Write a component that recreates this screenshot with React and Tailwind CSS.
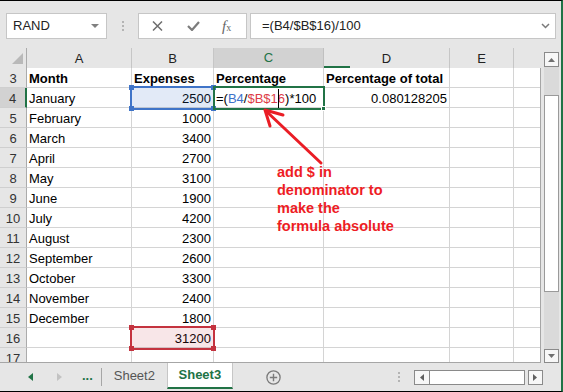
import React from "react";

const months = [
  ["January", 2500],
  ["February", 1000],
  ["March", 3400],
  ["April", 2700],
  ["May", 3100],
  ["June", 1900],
  ["July", 4200],
  ["August", 2300],
  ["September", 2600],
  ["October", 3300],
  ["November", 2400],
  ["December", 1800],
];

function cellContent(r, c) {
  // c: 0=A,1=B,2=C,3=D,4=E,5=F
  if (r === 3) {
    const t = ["Month", "Expenses", "Percentage", "Percentage of total", "", ""][c];
    return { text: t, bold: true };
  }
  if (r >= 4 && r <= 15) {
    const m = months[r - 4];
    if (c === 0) return { text: m[0] };
    if (c === 1) return { text: String(m[1]), right: true };
    if (r === 4 && c === 3) return { text: "0.080128205", right: true };
    if (r === 4 && c === 2) return { formula: true };
  }
  if (r === 16 && c === 1) return { text: "31200", right: true };
  return { text: "" };
}

function Formula() {
  return (
    <span>
      <span>=(</span>
      <span className="text-[#3d72c9]">B4</span>
      <span>/</span>
      <span className="text-[#dd3c48]">$B$1</span>
      <span className="relative text-[#dd3c48]">
        <span className="absolute left-0 top-[-2px] h-[19px] w-px bg-black"></span>6
      </span>
      <span>)*100</span>
    </span>
  );
}

function Tri({ dir, color, w = 5, h = 8 }) {
  const pts = {
    left: `${w},0 ${w},${h} 0,${h / 2}`,
    right: `0,0 0,${h} ${w},${h / 2}`,
    up: `0,${h} ${w},${h} ${w / 2},0`,
    down: `0,0 ${w},0 ${w / 2},${h}`,
  }[dir];
  return (
    <svg width={w} height={h} viewBox={`0 0 ${w} ${h}`} className="block">
      <polygon points={pts} fill={color} />
    </svg>
  );
}

export default function App() {
  const bodyCells = [];
  for (let r = 3; r <= 17; r++) {
    const sel = r === 4;
    bodyCells.push(
      <div
        key={`h${r}`}
        className={
          sel
            ? "bg-[#d2d2d2] border-r-2 border-r-[#217346] border-b border-b-[#cfcfcf] text-center text-[13px] leading-[21px] text-[#333]"
            : "bg-[#e6e6e6] border-r border-r-[#ababab] border-b border-b-[#cfcfcf] text-center text-[13px] leading-[21px] text-[#333]"
        }
      >
        {r}
      </div>
    );
    for (let c = 0; c < 6; c++) {
      const cc = cellContent(r, c);
      const base =
        c === 5
          ? "border-b border-b-[#d4d4d4] px-[2px] text-[13px] leading-[21px] whitespace-nowrap text-black"
          : "border-r border-r-[#d4d4d4] border-b border-b-[#d4d4d4] px-[2px] text-[13px] leading-[21px] whitespace-nowrap text-black";
      bodyCells.push(
        <div
          key={`c${r}-${c}`}
          className={`${base} ${cc.right ? "text-right" : "text-left"} ${cc.bold ? "font-bold" : ""}`}
        >
          {cc.formula ? <Formula /> : cc.text}
        </div>
      );
    }
  }

  const headers = ["A", "B", "C", "D", "E", ""];

  return (
    <div className="w-[563px] h-[392px] bg-[#e6e6e6] border-t border-b border-t-black border-b-black border-r-2 border-r-[#217346] flex flex-col overflow-hidden font-['Liberation_Sans',Arial,sans-serif] text-black">
      {/* Formula bar */}
      <div className="h-[47px] shrink-0 flex items-start pt-[12px]">
        <div className="ml-[6px] w-[101px] h-[26px] bg-white border border-[#c6c6c6] flex items-center justify-between pl-[6px] pr-[7px]">
          <span className="text-[13px] text-[#222]">RAND</span>
          <Tri dir="down" color="#808080" w={8} h={4} />
        </div>
        <div className="ml-[15px] mt-[8px] flex flex-col gap-[2px]">
          <div className="w-[2px] h-[2px] bg-[#b4b4b4]"></div>
          <div className="w-[2px] h-[2px] bg-[#b4b4b4]"></div>
          <div className="w-[2px] h-[2px] bg-[#b4b4b4]"></div>
        </div>
        <div className="ml-[14px] w-[109px] h-[26px] bg-white border border-[#c6c6c6] flex items-center">
          <svg width="11" height="10" viewBox="0 0 11 10" className="ml-[13px] block">
            <path d="M1 0.5 L10 9.5 M10 0.5 L1 9.5" stroke="#6e6e6e" strokeWidth="1.5" fill="none" />
          </svg>
          <svg width="13" height="10" viewBox="0 0 13 10" className="ml-[24px] block">
            <path d="M1 5 L5 9 L12 1" stroke="#7c7c7c" strokeWidth="2.2" fill="none" />
          </svg>
          <span className="ml-[22px] font-['Liberation_Serif',serif] italic text-[15px] text-[#666] leading-none">
            f<span className="text-[10px] not-italic font-['Liberation_Serif',serif] italic">x</span>
          </span>
        </div>
        <div className="ml-[3px] w-[306px] h-[26px] bg-white border border-[#c6c6c6] flex items-center justify-between pl-[11px] pr-[5px]">
          <span className="text-[13px] text-[#222]">=(B4/$B$16)/100</span>
          <svg width="9" height="6" viewBox="0 0 9 6" className="block">
            <path d="M1 1 L4.5 4.5 L8 1" stroke="#7a7a7a" strokeWidth="1.5" fill="none" />
          </svg>
        </div>
      </div>

      {/* Grid + vertical scrollbar */}
      <div className="h-[315px] shrink-0 flex">
        <div className="w-[541px] flex flex-col">
          {/* column header */}
          <div className="relative h-[20px] w-[541px] bg-[#e6e6e6] grid grid-cols-[27px_105px_82px_110px_126px_64px_26px]">
            <div className="relative border-r border-r-[#ababab] border-b border-b-[#ababab]">
              <svg width="12" height="12" viewBox="0 0 12 12" className="absolute left-[12px] top-[5px]">
                <polygon points="0,11 11,11 11,0" fill="#b9b9b9" />
              </svg>
            </div>
            {headers.map((h, i) =>
              h === "C" ? (
                <div
                  key={i}
                  className="bg-[#d2d2d2] border-r border-r-[#c0c0c0] border-b-2 border-b-[#217346] text-center text-[13px] leading-[19px] text-[#217346]"
                >
                  {h}
                </div>
              ) : (
                <div
                  key={i}
                  className={
                    i === 5
                      ? "border-b border-b-[#ababab] text-center text-[13px] leading-[21px] text-[#222]"
                      : "border-r border-r-[#c6c6c6] border-b border-b-[#ababab] text-center text-[13px] leading-[21px] text-[#222]"
                  }
                >
                  {h}
                </div>
              )
            )}
            <div className="absolute left-[324px] bottom-0 w-[26px] h-[2px] bg-[#217346]"></div>
          </div>

          {/* body */}
          <div className="relative h-[295px] w-[541px] bg-white border-r border-r-[#a6a6a6] border-b border-b-[#a6a6a6] overflow-hidden">
            <div className="grid grid-cols-[27px_105px_82px_110px_126px_64px_26px] auto-rows-[20px]">
              {bodyCells}
            </div>

            {/* B4 highlight */}
            <div className="absolute left-[130px] top-[18px] w-[85px] h-[24px] border-2 border-[#3f74c8] bg-[#3f74c8]/15"></div>
            <div className="absolute left-[129px] top-[17px] w-[5px] h-[5px] bg-[#3f74c8]"></div>
            <div className="absolute left-[211px] top-[17px] w-[5px] h-[5px] bg-[#3f74c8]"></div>
            <div className="absolute left-[129px] top-[38px] w-[5px] h-[5px] bg-[#3f74c8]"></div>
            <div className="absolute left-[211px] top-[38px] w-[5px] h-[5px] bg-[#3f74c8]"></div>

            {/* C4 active cell */}
            <div className="absolute left-[213px] top-[18px] w-[112px] h-[24px] border-2 border-[#217346]"></div>
            <div className="absolute left-[321px] top-[38px] w-[5px] h-[5px] bg-[#217346] border border-white"></div>

            {/* B16 highlight */}
            <div className="absolute left-[130px] top-[258px] w-[85px] h-[24px] border-2 border-[#c4333f] bg-[#c4333f]/12"></div>
            <div className="absolute left-[129px] top-[257px] w-[5px] h-[5px] bg-[#c4333f]"></div>
            <div className="absolute left-[211px] top-[257px] w-[5px] h-[5px] bg-[#c4333f]"></div>
            <div className="absolute left-[129px] top-[278px] w-[5px] h-[5px] bg-[#c4333f]"></div>
            <div className="absolute left-[211px] top-[278px] w-[5px] h-[5px] bg-[#c4333f]"></div>

            {/* arrow */}
            <svg width="541" height="295" viewBox="0 0 541 295" className="absolute left-0 top-0 pointer-events-none">
              <path d="M321 95 L266 43" stroke="#ea1d25" strokeWidth="3" fill="none" strokeLinecap="round" />
              <path d="M283 47 L265 42 L270 58" stroke="#ea1d25" strokeWidth="3" fill="none" strokeLinecap="round" strokeLinejoin="round" />
            </svg>

            {/* annotation */}
            <div className="absolute left-[277px] top-[95px] text-[14.5px] leading-[18px] font-bold text-[#ee1c24] whitespace-nowrap">
              <div>add $ in</div>
              <div>denominator to</div>
              <div>make the</div>
              <div>formula absolute</div>
            </div>
          </div>
        </div>

        {/* vertical scrollbar */}
        <div className="w-[20px] pt-[4px] pl-[3px] flex flex-col">
          <div className="w-[15px] h-[15px] bg-[#f7f7f7] border border-[#8a8a8a] flex items-center justify-center">
            <Tri dir="up" color="#707070" w={7} h={4} />
          </div>
          <div className="w-[15px] h-[282px] bg-[#dadada] pt-[28px]">
            <div className="w-[15px] h-[197px] bg-white border border-[#9a9a9a]"></div>
          </div>
          <div className="w-[15px] h-[14px] bg-[#f7f7f7] border border-[#8a8a8a] flex items-center justify-center">
            <Tri dir="down" color="#707070" w={7} h={4} />
          </div>
        </div>
      </div>

      {/* Tab bar */}
      <div className="h-[28px] shrink-0 flex items-center relative">
        <div className="ml-[28px]">
          <Tri dir="left" color="#217346" w={5} h={8} />
        </div>
        <div className="ml-[24px]">
          <Tri dir="right" color="#c2c2c2" w={5} h={8} />
        </div>
        <span className="ml-[20px] text-[13px] font-bold text-[#217346] leading-none -mt-[4px]">...</span>
        <div className="ml-[8px] w-px h-[18px] bg-[#a6a6a6]"></div>
        <div className="w-[65px] self-start h-[26px] flex items-center justify-center text-[13px] text-[#555]">
          Sheet2
        </div>
        <div className="w-[66px] self-start h-[26px] bg-white border-l border-r border-[#c6c6c6] border-b-2 border-b-[#217346] flex items-center justify-center text-[13px] font-bold text-[#217346]">
          Sheet3
        </div>
        <svg width="15" height="15" viewBox="0 0 15 15" className="ml-[33px] block">
          <circle cx="7.5" cy="7.5" r="6.6" stroke="#7a7a7a" strokeWidth="1.3" fill="none" />
          <path d="M7.5 3.8 V11.2 M3.8 7.5 H11.2" stroke="#7a7a7a" strokeWidth="1.4" />
        </svg>
        <div className="ml-[117px] flex flex-col gap-[2px]">
          <div className="w-[2px] h-[2px] bg-[#b4b4b4]"></div>
          <div className="w-[2px] h-[2px] bg-[#b4b4b4]"></div>
          <div className="w-[2px] h-[2px] bg-[#b4b4b4]"></div>
        </div>
        <div className="ml-[14px] flex items-center">
          <div className="w-[16px] h-[15px] bg-[#f7f7f7] border border-[#8a8a8a] flex items-center justify-center">
            <Tri dir="left" color="#606060" w={4} h={7} />
          </div>
          <div className="w-[95px] h-[15px] bg-white border border-l-0 border-[#8a8a8a]"></div>
          <div className="ml-[3px] w-[15px] h-[15px] bg-[#f7f7f7] border border-[#8a8a8a] flex items-center justify-center">
            <Tri dir="right" color="#606060" w={4} h={7} />
          </div>
        </div>
      </div>
    </div>
  );
}
